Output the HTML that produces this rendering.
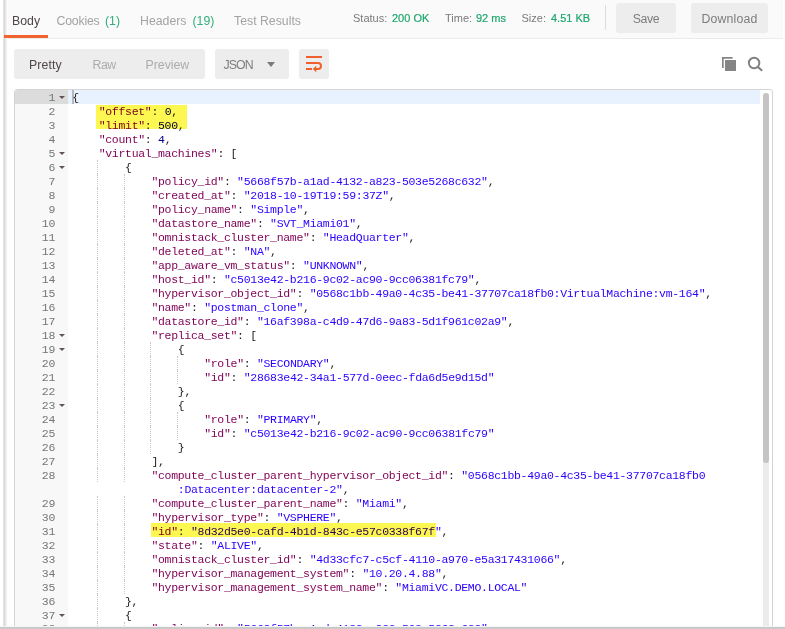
<!DOCTYPE html>
<html><head><meta charset="utf-8"><title>Response</title>
<style>
html,body{margin:0;padding:0;background:#fff;}
body{width:785px;height:629px;position:relative;overflow:hidden;font-family:"Liberation Sans",sans-serif;}
.abs{position:absolute}
#lb{position:absolute;left:3px;top:0;width:5px;height:629px;background:linear-gradient(90deg,#ececec 0,#d6d6d6 25%,#e2e2e2 45%,#f2f2f2 65%,#fafafa 85%,#fdfdfd 100%)}
#hdr{position:absolute;left:8px;top:0;width:775px;height:38px;background:#fafafa;border-bottom:1px solid #ebebeb}
.tab{position:absolute;top:13px;font-size:12.3px;color:#a3a3a3;white-space:nowrap;line-height:16px}
.tab b{font-weight:normal;color:#2fae7b}
#ul{position:absolute;left:4px;top:35px;width:44px;height:3px;background:#f1642f}
.st{position:absolute;top:11px;font-size:11px;color:#7a7a7a;white-space:nowrap;line-height:14px}
.st b{font-weight:normal;color:#1fa76e;-webkit-text-stroke:0.2px #1fa76e}
.btn{position:absolute;background:#ededed;border-radius:3px;color:#7d7d7d;font-size:12.3px;text-align:center}
#bot{position:absolute;left:0;top:626px;width:785px;height:3px;background:linear-gradient(#f4f4f4 0,#f4f4f4 33%,#c9c9c9 34%,#c9c9c9 100%)}
#ed{position:absolute;left:14px;top:89px;width:757px;height:560px;border:1px solid #d4d4d4;border-radius:3px;box-sizing:content-box}
#al{position:absolute;left:68px;top:90px;width:692px;height:14px;background:#e8f2fe}
#gut{position:absolute;left:15px;top:90px;width:53px;height:540px;background:#f8f8f8;border-top-left-radius:3px}
#gal{position:absolute;left:15px;top:90px;width:53px;height:14px;background:#dcdcdc;border-top-left-radius:3px}
#cur{position:absolute;left:72px;top:90px;width:2px;height:14px;background:#b4b8bd}
.ln{position:absolute;left:15px;width:40px;text-align:right;font:11.5px/14px "Liberation Mono",monospace;letter-spacing:-0.308px;color:#767676;height:14px}
.cl{position:absolute;font:11.5px/14px "Liberation Mono",monospace;letter-spacing:-0.308px;color:#222;white-space:pre;height:14px}
.k{color:#7f0055}.s{color:#2a00ff}.n{color:#00008b}.p{color:#222}
.hl{position:absolute;background:#fdf851;mix-blend-mode:multiply}
.g{position:absolute;width:0;height:14px;border-left:1px dotted #c8c8c8}
.f{position:absolute;left:59px;width:0;height:0;border-left:3px solid transparent;border-right:3px solid transparent;border-top:3px solid #5e5252}
#sbt{position:absolute;left:763px;top:93px;width:6px;height:540px;background:#ebebeb;border-radius:3px}
#sb{position:absolute;left:763px;top:93px;width:6px;height:370px;background:#c4c4c4;border-radius:3px}
</style></head><body>
<div id="lb"></div>
<div id="hdr"></div>
<div class="tab" style="left:12px;color:#4f464b">Body</div>
<div class="tab" style="left:56.5px;letter-spacing:-0.2px">Cookies</div><div class="tab" style="left:105px"><b>(1)</b></div>
<div class="tab" style="left:140px">Headers</div><div class="tab" style="left:192.5px"><b>(19)</b></div>
<div class="tab" style="left:234px">Test Results</div>
<div id="ul"></div>
<div class="st" style="left:353px">Status:</div><div class="st" style="left:392px"><b>200 OK</b></div>
<div class="st" style="left:445px">Time:</div><div class="st" style="left:476px"><b>92 ms</b></div>
<div class="st" style="left:521.5px">Size:</div><div class="st" style="left:551px"><b>4.51 KB</b></div>
<div class="abs" style="left:605px;top:5px;width:1px;height:25px;background:#dcdcdc"></div>
<div class="btn" style="left:616px;top:3px;width:60px;height:30px;line-height:33px;letter-spacing:-0.4px">Save</div>
<div class="btn" style="left:691px;top:3px;width:77px;height:30px;line-height:33px;letter-spacing:0.15px">Download</div>

<div class="btn" style="left:14px;top:49px;width:191px;height:30px"></div>
<div class="tab" style="left:29px;top:57px;color:#4f464b;letter-spacing:0.1px">Pretty</div>
<div class="tab" style="left:92.5px;top:57px;color:#acacac;letter-spacing:-0.5px">Raw</div>
<div class="tab" style="left:145.5px;top:57px;color:#acacac">Preview</div>
<div class="btn" style="left:215px;top:49px;width:74px;height:30px"></div>
<div class="tab" style="left:223.5px;top:57px;color:#7d7d7d;letter-spacing:-0.9px">JSON</div>
<div class="abs" style="left:267px;top:62px;width:0;height:0;border-left:4px solid transparent;border-right:4px solid transparent;border-top:5px solid #7a7a7a"></div>
<div class="btn" style="left:299px;top:49px;width:30px;height:30px"></div>
<svg class="abs" style="left:299px;top:49px" width="30" height="30" viewBox="0 0 30 30"><g fill="none" stroke="#f0602c" stroke-width="2"><path d="M7 8h16M7 14h12a3 3 0 0 1 0 6h-2.5M7 20h6"/></g><path d="M17.3 16.8v6.4l-3.5-3.2z" fill="#f0602c"/></svg>
<svg class="abs" style="left:720px;top:55px" width="20" height="20" viewBox="0 0 20 20"><path d="M2 2h10.6v1.7H3.7V13H2z" fill="#858585"/><rect x="5" y="5" width="11" height="11" fill="#858585"/></svg>
<svg class="abs" style="left:744px;top:53px" width="22" height="22" viewBox="0 0 22 22"><circle cx="10.1" cy="10" r="5.25" fill="none" stroke="#7f7f7f" stroke-width="1.9"/><path d="M14 14l3.6 3.2" stroke="#7f7f7f" stroke-width="2" stroke-linecap="round"/></svg>

<div id="ed"></div>
<div id="gut"></div>
<div id="gal"></div>
<div id="al"></div>
<div id="cur"></div>
<i class="g" style="left:97.0px;top:160px"></i>
<i class="g" style="left:97.0px;top:174px"></i>
<i class="g" style="left:124.0px;top:174px"></i>
<i class="g" style="left:97.0px;top:188px"></i>
<i class="g" style="left:124.0px;top:188px"></i>
<i class="g" style="left:97.0px;top:202px"></i>
<i class="g" style="left:124.0px;top:202px"></i>
<i class="g" style="left:97.0px;top:216px"></i>
<i class="g" style="left:124.0px;top:216px"></i>
<i class="g" style="left:97.0px;top:230px"></i>
<i class="g" style="left:124.0px;top:230px"></i>
<i class="g" style="left:97.0px;top:244px"></i>
<i class="g" style="left:124.0px;top:244px"></i>
<i class="g" style="left:97.0px;top:258px"></i>
<i class="g" style="left:124.0px;top:258px"></i>
<i class="g" style="left:97.0px;top:272px"></i>
<i class="g" style="left:124.0px;top:272px"></i>
<i class="g" style="left:97.0px;top:286px"></i>
<i class="g" style="left:124.0px;top:286px"></i>
<i class="g" style="left:97.0px;top:300px"></i>
<i class="g" style="left:124.0px;top:300px"></i>
<i class="g" style="left:97.0px;top:314px"></i>
<i class="g" style="left:124.0px;top:314px"></i>
<i class="g" style="left:97.0px;top:328px"></i>
<i class="g" style="left:124.0px;top:328px"></i>
<i class="g" style="left:97.0px;top:342px"></i>
<i class="g" style="left:124.0px;top:342px"></i>
<i class="g" style="left:150.0px;top:342px"></i>
<i class="g" style="left:97.0px;top:356px"></i>
<i class="g" style="left:124.0px;top:356px"></i>
<i class="g" style="left:150.0px;top:356px"></i>
<i class="g" style="left:177.0px;top:356px"></i>
<i class="g" style="left:97.0px;top:370px"></i>
<i class="g" style="left:124.0px;top:370px"></i>
<i class="g" style="left:150.0px;top:370px"></i>
<i class="g" style="left:177.0px;top:370px"></i>
<i class="g" style="left:97.0px;top:384px"></i>
<i class="g" style="left:124.0px;top:384px"></i>
<i class="g" style="left:150.0px;top:384px"></i>
<i class="g" style="left:97.0px;top:398px"></i>
<i class="g" style="left:124.0px;top:398px"></i>
<i class="g" style="left:150.0px;top:398px"></i>
<i class="g" style="left:97.0px;top:412px"></i>
<i class="g" style="left:124.0px;top:412px"></i>
<i class="g" style="left:150.0px;top:412px"></i>
<i class="g" style="left:177.0px;top:412px"></i>
<i class="g" style="left:97.0px;top:426px"></i>
<i class="g" style="left:124.0px;top:426px"></i>
<i class="g" style="left:150.0px;top:426px"></i>
<i class="g" style="left:177.0px;top:426px"></i>
<i class="g" style="left:97.0px;top:440px"></i>
<i class="g" style="left:124.0px;top:440px"></i>
<i class="g" style="left:150.0px;top:440px"></i>
<i class="g" style="left:97.0px;top:454px"></i>
<i class="g" style="left:124.0px;top:454px"></i>
<i class="g" style="left:97.0px;top:468px"></i>
<i class="g" style="left:124.0px;top:468px"></i>
<i class="g" style="left:97.0px;top:496px"></i>
<i class="g" style="left:124.0px;top:496px"></i>
<i class="g" style="left:97.0px;top:510px"></i>
<i class="g" style="left:124.0px;top:510px"></i>
<i class="g" style="left:97.0px;top:524px"></i>
<i class="g" style="left:124.0px;top:524px"></i>
<i class="g" style="left:97.0px;top:538px"></i>
<i class="g" style="left:124.0px;top:538px"></i>
<i class="g" style="left:97.0px;top:552px"></i>
<i class="g" style="left:124.0px;top:552px"></i>
<i class="g" style="left:97.0px;top:566px"></i>
<i class="g" style="left:124.0px;top:566px"></i>
<i class="g" style="left:97.0px;top:580px"></i>
<i class="g" style="left:124.0px;top:580px"></i>
<i class="g" style="left:97.0px;top:594px"></i>
<i class="g" style="left:97.0px;top:608px"></i>
<i class="g" style="left:97.0px;top:622px"></i>
<i class="g" style="left:124.0px;top:622px"></i>
<div class="ln" style="top:91px">1</div>
<i class="f" style="top:96px"></i>
<div class="cl" style="left:72.3px;top:91px"><span class="p">{</span></div>
<div class="ln" style="top:105px">2</div>
<div class="cl" style="left:98.7px;top:105px"><span class="k">"offset"</span><span class="p">: </span><span class="n">0</span><span class="p">,</span></div>
<div class="ln" style="top:119px">3</div>
<div class="cl" style="left:98.7px;top:119px"><span class="k">"limit"</span><span class="p">: </span><span class="n">500</span><span class="p">,</span></div>
<div class="ln" style="top:133px">4</div>
<div class="cl" style="left:98.7px;top:133px"><span class="k">"count"</span><span class="p">: </span><span class="n">4</span><span class="p">,</span></div>
<div class="ln" style="top:147px">5</div>
<i class="f" style="top:152px"></i>
<div class="cl" style="left:98.7px;top:147px"><span class="k">"virtual_machines"</span><span class="p">: [</span></div>
<div class="ln" style="top:161px">6</div>
<i class="f" style="top:166px"></i>
<div class="cl" style="left:125.0px;top:161px"><span class="p">{</span></div>
<div class="ln" style="top:175px">7</div>
<div class="cl" style="left:151.4px;top:175px"><span class="k">"policy_id"</span><span class="p">: </span><span class="s">"5668f57b-a1ad-4132-a823-503e5268c632"</span><span class="p">,</span></div>
<div class="ln" style="top:189px">8</div>
<div class="cl" style="left:151.4px;top:189px"><span class="k">"created_at"</span><span class="p">: </span><span class="s">"2018-10-19T19:59:37Z"</span><span class="p">,</span></div>
<div class="ln" style="top:203px">9</div>
<div class="cl" style="left:151.4px;top:203px"><span class="k">"policy_name"</span><span class="p">: </span><span class="s">"Simple"</span><span class="p">,</span></div>
<div class="ln" style="top:217px">10</div>
<div class="cl" style="left:151.4px;top:217px"><span class="k">"datastore_name"</span><span class="p">: </span><span class="s">"SVT_Miami01"</span><span class="p">,</span></div>
<div class="ln" style="top:231px">11</div>
<div class="cl" style="left:151.4px;top:231px"><span class="k">"omnistack_cluster_name"</span><span class="p">: </span><span class="s">"HeadQuarter"</span><span class="p">,</span></div>
<div class="ln" style="top:245px">12</div>
<div class="cl" style="left:151.4px;top:245px"><span class="k">"deleted_at"</span><span class="p">: </span><span class="s">"NA"</span><span class="p">,</span></div>
<div class="ln" style="top:259px">13</div>
<div class="cl" style="left:151.4px;top:259px"><span class="k">"app_aware_vm_status"</span><span class="p">: </span><span class="s">"UNKNOWN"</span><span class="p">,</span></div>
<div class="ln" style="top:273px">14</div>
<div class="cl" style="left:151.4px;top:273px"><span class="k">"host_id"</span><span class="p">: </span><span class="s">"c5013e42-b216-9c02-ac90-9cc06381fc79"</span><span class="p">,</span></div>
<div class="ln" style="top:287px">15</div>
<div class="cl" style="left:151.4px;top:287px"><span class="k">"hypervisor_object_id"</span><span class="p">: </span><span class="s">"0568c1bb-49a0-4c35-be41-37707ca18fb0:VirtualMachine:vm-164"</span><span class="p">,</span></div>
<div class="ln" style="top:301px">16</div>
<div class="cl" style="left:151.4px;top:301px"><span class="k">"name"</span><span class="p">: </span><span class="s">"postman_clone"</span><span class="p">,</span></div>
<div class="ln" style="top:315px">17</div>
<div class="cl" style="left:151.4px;top:315px"><span class="k">"datastore_id"</span><span class="p">: </span><span class="s">"16af398a-c4d9-47d6-9a83-5d1f961c02a9"</span><span class="p">,</span></div>
<div class="ln" style="top:329px">18</div>
<i class="f" style="top:334px"></i>
<div class="cl" style="left:151.4px;top:329px"><span class="k">"replica_set"</span><span class="p">: [</span></div>
<div class="ln" style="top:343px">19</div>
<i class="f" style="top:348px"></i>
<div class="cl" style="left:177.8px;top:343px"><span class="p">{</span></div>
<div class="ln" style="top:357px">20</div>
<div class="cl" style="left:204.2px;top:357px"><span class="k">"role"</span><span class="p">: </span><span class="s">"SECONDARY"</span><span class="p">,</span></div>
<div class="ln" style="top:371px">21</div>
<div class="cl" style="left:204.2px;top:371px"><span class="k">"id"</span><span class="p">: </span><span class="s">"28683e42-34a1-577d-0eec-fda6d5e9d15d"</span></div>
<div class="ln" style="top:385px">22</div>
<div class="cl" style="left:177.8px;top:385px"><span class="p">},</span></div>
<div class="ln" style="top:399px">23</div>
<i class="f" style="top:404px"></i>
<div class="cl" style="left:177.8px;top:399px"><span class="p">{</span></div>
<div class="ln" style="top:413px">24</div>
<div class="cl" style="left:204.2px;top:413px"><span class="k">"role"</span><span class="p">: </span><span class="s">"PRIMARY"</span><span class="p">,</span></div>
<div class="ln" style="top:427px">25</div>
<div class="cl" style="left:204.2px;top:427px"><span class="k">"id"</span><span class="p">: </span><span class="s">"c5013e42-b216-9c02-ac90-9cc06381fc79"</span></div>
<div class="ln" style="top:441px">26</div>
<div class="cl" style="left:177.8px;top:441px"><span class="p">}</span></div>
<div class="ln" style="top:455px">27</div>
<div class="cl" style="left:151.4px;top:455px"><span class="p">],</span></div>
<div class="ln" style="top:469px">28</div>
<div class="cl" style="left:151.4px;top:469px"><span class="k">"compute_cluster_parent_hypervisor_object_id"</span><span class="p">: </span><span class="s">"0568c1bb-49a0-4c35-be41-37707ca18fb0</span></div>
<div class="cl" style="left:177.8px;top:483px"><span class="s">:Datacenter:datacenter-2"</span><span class="p">,</span></div>
<div class="ln" style="top:497px">29</div>
<div class="cl" style="left:151.4px;top:497px"><span class="k">"compute_cluster_parent_name"</span><span class="p">: </span><span class="s">"Miami"</span><span class="p">,</span></div>
<div class="ln" style="top:511px">30</div>
<div class="cl" style="left:151.4px;top:511px"><span class="k">"hypervisor_type"</span><span class="p">: </span><span class="s">"VSPHERE"</span><span class="p">,</span></div>
<div class="ln" style="top:525px">31</div>
<div class="cl" style="left:151.4px;top:525px"><span class="k">"id"</span><span class="p">: </span><span class="s">"8d32d5e0-cafd-4b1d-843c-e57c0338f67f"</span><span class="p">,</span></div>
<div class="ln" style="top:539px">32</div>
<div class="cl" style="left:151.4px;top:539px"><span class="k">"state"</span><span class="p">: </span><span class="s">"ALIVE"</span><span class="p">,</span></div>
<div class="ln" style="top:553px">33</div>
<div class="cl" style="left:151.4px;top:553px"><span class="k">"omnistack_cluster_id"</span><span class="p">: </span><span class="s">"4d33cfc7-c5cf-4110-a970-e5a317431066"</span><span class="p">,</span></div>
<div class="ln" style="top:567px">34</div>
<div class="cl" style="left:151.4px;top:567px"><span class="k">"hypervisor_management_system"</span><span class="p">: </span><span class="s">"10.20.4.88"</span><span class="p">,</span></div>
<div class="ln" style="top:581px">35</div>
<div class="cl" style="left:151.4px;top:581px"><span class="k">"hypervisor_management_system_name"</span><span class="p">: </span><span class="s">"MiamiVC.DEMO.LOCAL"</span></div>
<div class="ln" style="top:595px">36</div>
<div class="cl" style="left:125.0px;top:595px"><span class="p">},</span></div>
<div class="ln" style="top:609px">37</div>
<i class="f" style="top:614px"></i>
<div class="cl" style="left:125.0px;top:609px"><span class="p">{</span></div>
<div class="ln" style="top:622px">38</div>
<div class="cl" style="left:151.4px;top:622px"><span class="k">"policy_id"</span><span class="p">: </span><span class="s">"5668f57b-a1ad-4132-a823-503e5268c632"</span><span class="p">,</span></div>
<div class="hl" style="left:96px;top:105px;width:91px;height:24px"></div>
<div class="hl" style="left:151px;top:523px;width:285px;height:14px"></div>
<div id="sbt"></div>
<div id="sb"></div>
<div id="bot"></div>
</body></html>
